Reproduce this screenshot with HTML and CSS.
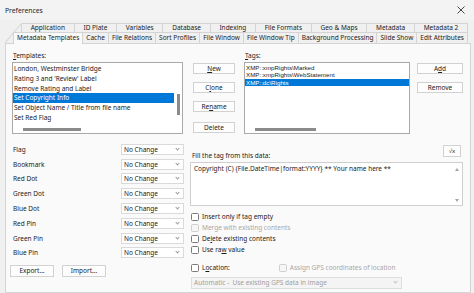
FILE: index.html
```html
<!DOCTYPE html>
<html>
<head>
<meta charset="utf-8">
<link rel="stylesheet" href="styles.css">
</head>
<body>
<div class="window">
  <div class="titlebar">
    <span class="title">Preferences</span>
    <svg class="close" width="8" height="8" viewBox="0 0 8 8"><path d="M0.5 0.5L7.5 7.5M7.5 0.5L0.5 7.5" stroke="#333" stroke-width="0.9"/></svg>
  </div>
  <div class="tabs">
    <div class="tabrow r1">
      <svg class="slant" width="9" height="10" viewBox="0 0 9 10"><path d="M0 10L9 0" stroke="#d0d0d0" stroke-width="1"/></svg>
      <div class="tab">Application</div><div class="tab">ID Plate</div><div class="tab">Variables</div><div class="tab">Database</div><div class="tab">Indexing</div><div class="tab">File Formats</div><div class="tab">Geo &amp; Maps</div><div class="tab">Metadata</div><div class="tab">Metadata 2</div>
    </div>
    <div class="tabrow r2">
      <svg class="slant" width="9" height="11" viewBox="0 0 9 11"><path d="M0 11L9 0" stroke="#d0d0d0" stroke-width="1"/></svg>
      <div class="tab sel">Metadata Templates</div><div class="tab">Cache</div><div class="tab">File Relations</div><div class="tab">Sort Profiles</div><div class="tab">File Window</div><div class="tab">File Window Tip</div><div class="tab">Background Processing</div><div class="tab">Slide Show</div><div class="tab">Edit Attributes</div>
    </div>
  </div>
  <div class="panel">
    <div class="top">
      <div class="col-templates">
        <div class="label"><u>T</u>emplates:</div>
        <div class="listbox tlist">
          <div class="items">
            <div class="item">London, Westminster Bridge</div>
            <div class="item">Rating 3 and 'Review' Label</div>
            <div class="item">Remove Rating and Label</div>
            <div class="item selected">Set Copyright Info</div>
            <div class="item">Set Object Name / Title from file name</div>
            <div class="item">Set Red Flag</div>
          </div>
          <div class="vscroll"><div class="vthumb"></div></div>
          <div class="hscroll"><div class="hthumb t"></div></div>
        </div>
      </div>
      <div class="col-buttons">
        <div class="btn"><u>N</u>ew</div>
        <div class="btn">C<u>l</u>one</div>
        <div class="btn">Re<u>n</u>ame</div>
        <div class="btn gap">Delete</div>
      </div>
      <div class="col-tags">
        <div class="label"><u>T</u>ags:</div>
        <div class="listbox glist">
          <div class="items small">
            <div class="item">XMP::xmpRights\Marked</div>
            <div class="item">XMP::xmpRights\WebStatement</div>
            <div class="item selected">XMP::dc\Rights</div>
          </div>
          <div class="hscroll"><div class="hthumb g"></div></div>
        </div>
      </div>
      <div class="col-add">
        <div class="btn">A<u>d</u>d</div>
        <div class="btn">Remove</div>
      </div>
    </div>
    <div class="bottom">
      <div class="flags">
        <div class="frow"><span>Flag</span><div class="select">No Change<span class="chev"></span></div></div>
        <div class="frow"><span>Bookmark</span><div class="select">No Change<span class="chev"></span></div></div>
        <div class="frow"><span>Red Dot</span><div class="select">No Change<span class="chev"></span></div></div>
        <div class="frow"><span>Green Dot</span><div class="select">No Change<span class="chev"></span></div></div>
        <div class="frow"><span>Blue Dot</span><div class="select">No Change<span class="chev"></span></div></div>
        <div class="frow"><span>Red Pin</span><div class="select">No Change<span class="chev"></span></div></div>
        <div class="frow"><span>Green Pin</span><div class="select">No Change<span class="chev"></span></div></div>
        <div class="frow"><span>Blue Pin</span><div class="select">No Change<span class="chev"></span></div></div>
        <div class="exprow">
          <div class="btn wide">Export...</div>
          <div class="btn wide">Import...</div>
        </div>
      </div>
      <div class="fill">
        <div class="fillhead">
          <span class="filllabel">Fill the tag from this data:</span>
          <div class="btn sqrt">√x</div>
        </div>
        <div class="textarea">
          <span class="tatext">Copyright (C) {File.DateTime|format:YYYY} ** Your name here **</span>
          <div class="tascroll"><span class="arr up"></span><span class="arr down"></span></div>
        </div>
        <div class="checks">
          <div class="chk"><span class="box"></span>Insert only if tag empty</div>
          <div class="chk dis"><span class="box"></span>Merge with existing contents</div>
          <div class="chk"><span class="box"></span>De<u>l</u>ete existing contents</div>
          <div class="chk"><span class="box"></span>Use ra<u>w</u>&nbsp;value</div>
        </div>
        <div class="locrow">
          <div class="chk"><span class="box"></span>L<u>o</u>cation:</div>
          <div class="chk dis assign"><span class="box"></span>Assign GPS coordinates of location</div>
        </div>
        <div class="select dis locsel">Automatic -&nbsp; Use existing GPS data in image<span class="chev"></span></div>
      </div>
    </div>
  </div>
</div>
</body>
</html>
```
FILE: styles.css
```css
* { box-sizing: border-box; }
html, body { margin: 0; padding: 0; }
body {
  font-family: "Noto Sans", "Liberation Sans", sans-serif;
  font-size: 6.5px;
  color: #1a1a1a;
  background: #f0f0f0;
}
u { text-decoration: underline; text-underline-offset: 1px; }
.window {
  width: 474px;
  height: 293px;
  display: flex;
  flex-direction: column;
  background: #f0f0f0;
  overflow: hidden;
}
.titlebar {
  height: 20px;
  display: flex;
  align-items: center;
  justify-content: space-between;
  padding: 0 9px 0 5px;
  background: #f3f3f3;
}
.title { font-size: 6.8px; color: #222; }
.close { display: block; }

.tabs { padding-top: 3px; }
.tabrow { display: flex; align-items: stretch; }
.tabrow .slant { display: block; flex: none; }
.r1 { height: 9px; margin-left: 13px; margin-right: 6px; }
.r2 { height: 11px; margin-left: 5px; margin-right: 6px; }
.tab {
  flex: 1 1 auto;
  border: 1px solid #d4d4d4;
  border-bottom: none;
  margin-left: -1px;
  text-align: center;
  white-space: nowrap;
  line-height: 8px;
  padding: 0 1px;
  background: #f0f0f0;
  color: #222;
}
.r2 .tab { line-height: 10px; }
.tab.sel { background: #fafafa; position: relative; z-index: 1; margin-bottom: -1px; }

.panel {
  flex: 1;
  margin: 0 3px 0 5px;
  border: 1px solid #d4d4d4;
  background: #fafafa;
  padding: 7px 6px 0 6px;
}
.top { display: flex; align-items: flex-start; }
.label { height: 10px; line-height: 10px; padding-left: 1px; margin-bottom: 1px; }
.col-templates { width: 171px; }
.col-buttons { width: 42px; margin-left: 10px; margin-top: 12px; display: flex; flex-direction: column; gap: 8px; }
.col-buttons .gap { margin-top: 2px; }
.col-tags { width: 166px; margin-left: 9px; }
.col-add { width: 46px; margin-left: 7px; margin-top: 12px; display: flex; flex-direction: column; gap: 8px; }

.btn {
  height: 11px;
  line-height: 9px;
  border: 1px solid #d2d2d2;
  background: #fdfdfd;
  text-align: center;
  white-space: nowrap;
  color: #222;
}
.listbox {
  height: 72px;
  border: 1px solid #a9a9a9;
  background: #fff;
  position: relative;
}
.items { padding-top: 1px; }
.item { height: 9.8px; line-height: 9.8px; padding-left: 1px; white-space: nowrap; }
.tlist .item { margin-right: 8px; }
.items.small .item {
  height: 7.4px;
  line-height: 7.4px;
  font-family: "Liberation Sans", "Noto Sans", sans-serif;
  font-size: 6.2px;
}
.glist .items { padding-top: 1px; }
.item.selected { background: #0078d7; color: #fff; }
.vscroll { position: absolute; right: 1px; top: 31px; width: 4px; height: 22px; }
.vthumb { width: 3px; height: 21px; background: #8b8b8b; }
.hscroll { position: absolute; left: 0; right: 0; bottom: 2px; height: 3px; }
.hthumb { height: 3px; background: #8b8b8b; }
.hthumb.t { margin-left: 10px; width: 58px; }
.hthumb.g { margin-left: 10px; width: 61px; }

.bottom { display: flex; margin-top: 10px; }
.flags { width: 172px; }
.frow { display: flex; align-items: center; justify-content: space-between; height: 14.8px; padding-left: 1px; }
.frow:first-child { margin-top: -2px; }
.select {
  width: 63px;
  height: 11px;
  line-height: 9px;
  border: 1px solid #dadada;
  background: #fff;
  padding-left: 2px;
  position: relative;
  white-space: nowrap;
}
.chev {
  position: absolute;
  right: 4px;
  top: 2px;
  width: 3px;
  height: 3px;
  border-right: 1px solid #9a9a9a;
  border-bottom: 1px solid #9a9a9a;
  transform: rotate(45deg);
}
.exprow { display: flex; gap: 8px; margin-top: 5px; margin-left: -2px; }
.btn.wide { width: 44px; height: 12px; line-height: 10px; }

.fill { width: 273px; margin-left: 6px; }
.fillhead { display: flex; justify-content: space-between; align-items: flex-end; height: 12px; margin-top: 1px; padding-right: 2px; }
.filllabel { padding-left: 2px; line-height: 8px; margin-bottom: -3px; }
.btn.sqrt { width: 18px; height: 12px; line-height: 10px; font-size: 6px; }
.textarea {
  margin-top: 5px;
  height: 44px;
  border: 1px solid #cfcfcf;
  background: #fff;
  display: flex;
  justify-content: space-between;
  padding: 2px 0 0 3px;
}
.tatext { line-height: 8px; white-space: nowrap; }
.tascroll { width: 10px; display: flex; flex-direction: column; justify-content: space-between; align-items: center; padding: 3px 0 3px; }
.arr { width: 0; height: 0; border-left: 2px solid transparent; border-right: 2px solid transparent; }
.arr.up { border-bottom: 3px solid #a6a6a6; }
.arr.down { border-top: 3px solid #a6a6a6; }

.checks { margin-top: 5px; }
.chk { display: flex; align-items: center; height: 11px; padding-left: 1px; white-space: nowrap; }
.box { width: 8px; height: 8px; border: 1px solid #7a7a7a; border-radius: 1.5px; background: #fff; margin-right: 3px; flex: none; }
.chk.dis { color: #a8a8a8; }
.chk.dis .box { border-color: #cfcfcf; background: #f6f6f6; }
.locrow { display: flex; margin-top: 7px; }
.locrow .assign { margin-left: 48px; }
.select.dis.locsel {
  width: 211px;
  height: 12px;
  line-height: 10px;
  margin-top: 4px;
  margin-left: 1px;
  color: #a0a0a0;
  background: #f4f4f4;
  border-color: #dedede;
}
.locsel .chev { border-color: #c4c4c4; }
```
